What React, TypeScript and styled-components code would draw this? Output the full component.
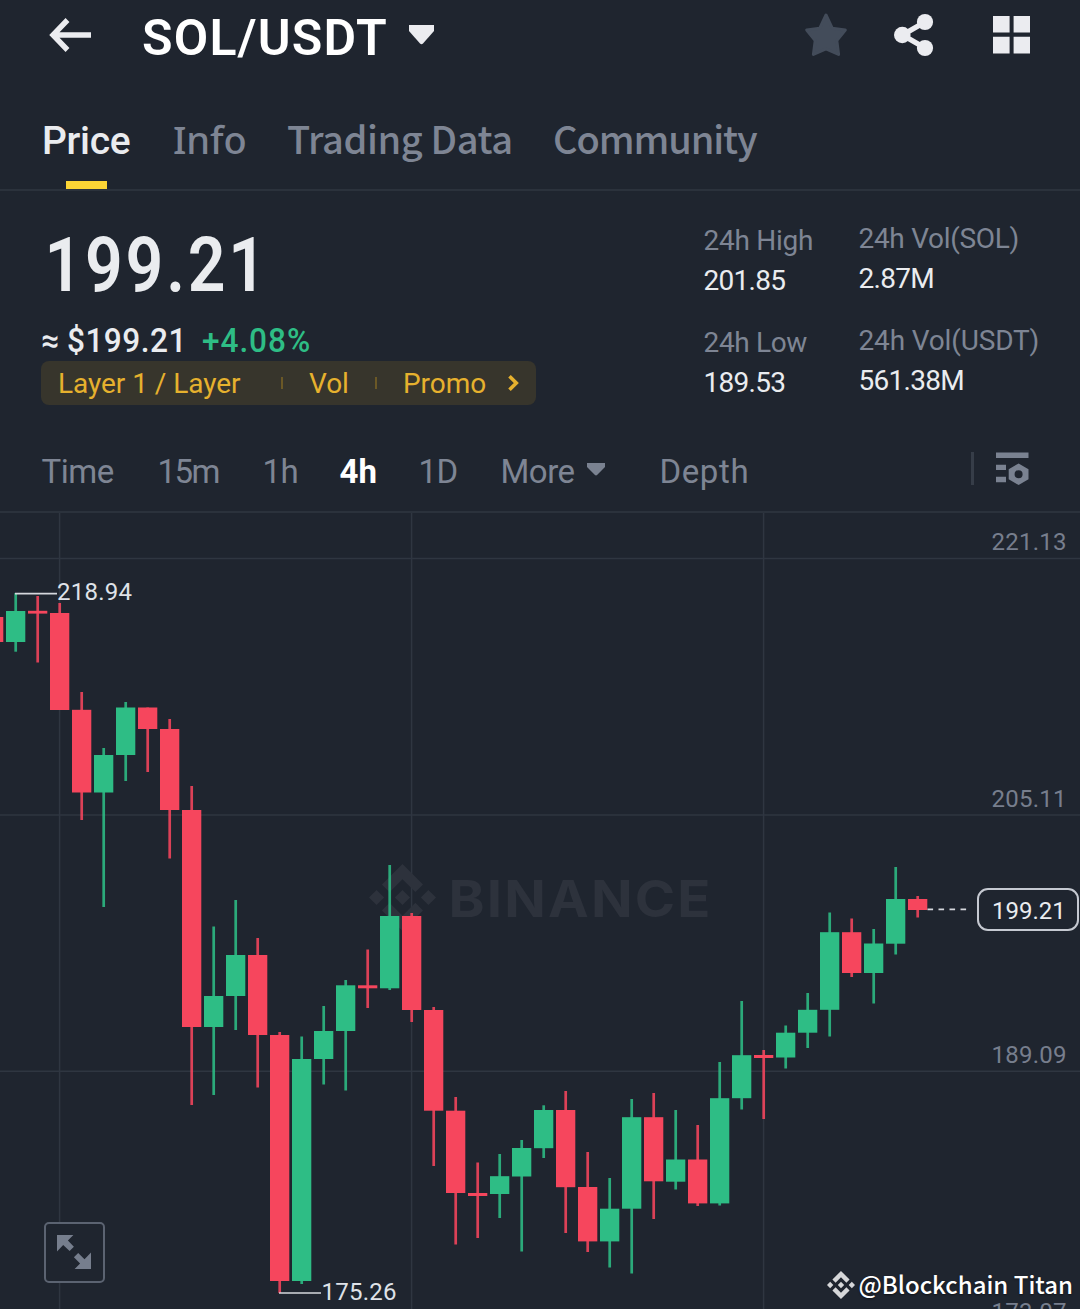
import React from 'react';
import styled, { createGlobalStyle } from 'styled-components';
import { SiBinance } from 'react-icons/si';

const color = {
  bg: '#1f252f',
  text: '#eaecef',
  muted: '#7e8594',
  line: '#2b323c',
  up: '#2ebd85',
  down: '#f6465d',
  gold: '#e6b12e',
};

const Global = createGlobalStyle`
  body { margin: 0; background: ${color.bg}; }
  * { box-sizing: border-box; }
`;

const Screen = styled.main`
  position: relative;
  width: 1080px;
  height: 1309px;
  overflow: hidden;
  display: flex;
  flex-direction: column;
  background: ${color.bg};
  color: ${color.text};
  font-family: Roboto, 'Liberation Sans', sans-serif;
  white-space: nowrap;
`;

const Header = styled.header`
  height: 70px;
  display: grid;
  grid-template-columns: 93px 267px 395px 90px 99px 60px;
  grid-template-rows: 70px;
  padding-left: 49px;
  align-items: center;
  svg { display: block; }
`;

const Pair = styled.h1`
  margin: 0;
  padding-top: 5px;
  font-size: 50px;
  line-height: 66px;
  font-weight: 600;
  letter-spacing: 1.2px;
  color: #fff;
`;

const Tabs = styled.nav`
  height: 121px;
  border-bottom: 2px solid ${color.line};
  display: grid;
  grid-template-columns: 131px 114px 266px 300px;
  padding-left: 42px;
`;

const Tab = styled.div<{ $active?: boolean; $spacing: number; $family?: string; $size?: number; $top?: number }>`
  display: flex;
  flex-direction: column;
  justify-content: space-between;
  padding-top: ${(p) => p.$top ?? 46}px;
  font-family: ${(p) => p.$family ?? 'Roboto'}, sans-serif;
  font-size: ${(p) => p.$size ?? 39}px;
  line-height: 48px;
  font-weight: 500;
  letter-spacing: ${(p) => p.$spacing}px;
  color: ${(p) => (p.$active ? color.text : color.muted)};
`;

const Underline = styled.span`
  width: 41px;
  height: 8px;
  margin-left: 24px;
  background: #fcd535;
`;

const Summary = styled.section`
  height: 240px;
  display: grid;
  grid-template-columns: 662.5px 155px 200px;
  padding-left: 41px;
`;

const Quote = styled.div`
  padding-top: 34px;
`;

const LastPrice = styled.div`
  padding-left: 4px;
  font-size: 76px;
  line-height: 80px;
  font-weight: 650;
  letter-spacing: 3.2px;
  transform: scaleX(0.87);
  transform-origin: left;
`;

const Converted = styled.div`
  display: grid;
  grid-template-columns: 26px 135px auto;
  margin-top: 15px;
  font-size: 34px;
  line-height: 40px;
  font-weight: 500;
`;

const Figure = styled.span<{ $spacing: number; $up?: boolean }>`
  letter-spacing: ${(p) => p.$spacing}px;
  color: ${(p) => (p.$up ? color.up : 'inherit')};
  transform: scaleX(0.93);
  transform-origin: left;
`;

const Tags = styled.div`
  width: 495px;
  height: 44px;
  margin-top: 1px;
  padding-left: 17px;
  display: grid;
  grid-template-columns: 223px 28px 66px 28px 104px 20px;
  align-items: center;
  border-radius: 8px;
  background: #37352c;
  color: ${color.gold};
  font-size: 28px;
  letter-spacing: -0.05px;
`;

const TagBar = styled.i`
  width: 2px;
  height: 12px;
  background: #6b5826;
`;

const Stats = styled.dl<{ $top: number }>`
  margin: 0;
  padding-top: ${(p) => p.$top}px;
  font-size: 28px;
  line-height: 40px;
`;

const StatLabel = styled.dt<{ $spacing?: number }>`
  color: ${color.muted};
  letter-spacing: ${(p) => p.$spacing ?? -0.15}px;
`;

const StatValue = styled.dd`
  margin: 0 0 22px;
  letter-spacing: -0.7px;
`;

const Intervals = styled.nav`
  height: 82px;
  display: grid;
  grid-template-columns: 116px 105px 77px 79px 82px 86px 73px 311px 25px 40px;
  padding-left: 41.5px;
  align-items: center;
  border-bottom: 2px solid ${color.line};
  font-size: 33px;
  color: ${color.muted};
  svg { display: block; margin-top: -4px; }
`;

const Interval = styled.span<{ $active?: boolean; $spacing?: number }>`
  letter-spacing: ${(p) => p.$spacing ?? -0.5}px;
  font-weight: ${(p) => (p.$active ? 700 : 400)};
  color: ${(p) => (p.$active ? '#fff' : 'inherit')};
`;

const Divider = styled.i`
  width: 3px;
  height: 33px;
  margin-top: -5px;
  background: #363d48;
`;

const ChartArea = styled.section`
  position: relative;
  height: 796px;
`;

const ChartSvg = styled.svg`
  display: block;
  font-family: Roboto, sans-serif;
  font-size: 24px;
  font-weight: 380;
  letter-spacing: 0.25px;
`;

const PriceTag = styled.div`
  position: absolute;
  left: 977px;
  top: 375px;
  width: 102px;
  height: 43px;
  border: 2px solid #c5c9d1;
  border-radius: 11px;
  background: ${color.bg};
  padding-left: 13px;
  font-size: 24px;
  font-weight: 380;
  line-height: 42px;
`;

const ExpandButton = styled.button`
  position: absolute;
  left: 44px;
  top: 709px;
  width: 61px;
  height: 61px;
  padding: 0 1px 1px 0;
  border: 2px solid #5b6371;
  border-radius: 5px;
  background: ${color.bg};
  display: grid;
  place-items: center;
`;

const Author = styled.div`
  position: absolute;
  right: 7px;
  bottom: 8px;
  display: flex;
  align-items: center;
  gap: 3px;
  font: 500 24px/34px 'Noto Sans CJK SC', sans-serif;
  color: #fff;
  text-shadow: 0 1px 2px #0008;
  svg { color: #d6d7d9; display: block; margin-top: 1px; }
`;

type Candle = [up: 0 | 1, high: number, top: number, bottom: number, low: number];

const candles: Candle[] = [
  [0, 617, 617, 642, 642],
  [1, 593, 611, 642, 651.7],
  [0, 596, 610.8, 613.6, 662.5],
  [0, 603, 613, 710, 710],
  [0, 692, 709.8, 792.5, 820],
  [1, 748, 755, 792.5, 907],
  [1, 702, 707.5, 755, 781],
  [0, 707.5, 707.5, 729, 772],
  [0, 719, 729, 810, 858.5],
  [0, 786, 810, 1027, 1105],
  [1, 926.5, 996, 1027, 1095],
  [1, 900, 955, 996, 1030],
  [0, 938, 955, 1035, 1087.5],
  [0, 1032, 1035, 1281, 1293],
  [1, 1036.5, 1059, 1281, 1284],
  [1, 1006, 1031, 1059, 1084.5],
  [1, 980, 985.3, 1031, 1090.5],
  [0, 949.5, 985.3, 988.3, 1008],
  [1, 865, 916, 988.3, 990],
  [0, 913, 916, 1010, 1022],
  [0, 1007, 1010, 1110.7, 1166],
  [0, 1097, 1110.7, 1193, 1244.5],
  [0, 1162.5, 1193, 1196, 1238],
  [1, 1154, 1176.2, 1194, 1218],
  [1, 1140, 1148, 1176.5, 1251.5],
  [1, 1105.3, 1110, 1148.2, 1158],
  [0, 1091, 1110, 1187.2, 1233],
  [0, 1152, 1187, 1241.4, 1252],
  [1, 1178, 1208.7, 1241.4, 1267.5],
  [1, 1099, 1117.2, 1208.7, 1273.5],
  [0, 1093, 1117.2, 1181.3, 1219],
  [1, 1110, 1159.5, 1181.7, 1189.5],
  [0, 1125, 1159.5, 1203.4, 1206],
  [1, 1062, 1098.2, 1203.4, 1205.5],
  [1, 1001, 1055.2, 1098.2, 1109.5],
  [0, 1050, 1055, 1058, 1119],
  [1, 1025.5, 1032.7, 1057.5, 1068.5],
  [1, 993, 1009.8, 1032.7, 1048],
  [1, 912.5, 932.2, 1009.8, 1036.5],
  [0, 918.5, 932.2, 973, 977],
  [1, 929, 943.5, 973, 1003.5],
  [1, 867, 899, 943.7, 954.5],
  [0, 896, 899, 910, 917.5],
];

const Caret = ({ width, height, fill }: { width: number; height: number; fill: string }) => (
  <svg width={width} height={height} viewBox="0 0 25 20" preserveAspectRatio="none">
    <path d="M0 0H25V6L14 18.6Q12.5 20 11 18.6L0 6Z" fill={fill} />
  </svg>
);

const BackArrow = () => (
  <svg width="42" height="36" viewBox="0 0 42 36" fill="none" stroke="#ebecf0" strokeWidth="5.4">
    <path d="M18.5 3L4 18L18.5 33M4 18H42" />
  </svg>
);

const Star = () => (
  <svg width="44" height="46" viewBox="0 0 44 46" fill="#434c5a" stroke="#434c5a" strokeWidth="3" strokeLinejoin="round">
    <path d="M22 3L28.2 16.2L41.3 18L32.8 28.5L34.6 42.5L22 36.8L9.4 42.5L11.2 28.5L2.7 18L15.8 16.2Z" />
  </svg>
);

const Share = () => (
  <svg width="40" height="44" viewBox="0 0 40 44" fill="#ebecf0">
    <path d="M31 9L8.5 22L31 35" fill="none" stroke="#ebecf0" strokeWidth="5.4" />
    <circle cx="31" cy="9" r="8.1" />
    <circle cx="8.3" cy="22" r="8.3" />
    <circle cx="31" cy="35" r="8.1" />
  </svg>
);

const Squares = () => (
  <svg width="38" height="38" viewBox="0 0 38 38" fill="#ebecf0">
    <path d="M0 0H16.6V16.6H0ZM20.6 0H37V16.6H20.6ZM0 20.8H16.6V37.4H0ZM20.6 20.8H37V37.4H20.6Z" />
  </svg>
);

const ChartSettings = () => (
  <svg width="33" height="34" viewBox="0 0 33 34" fill="#7a8291">
    <path d="M0 0.5H32.5V6H0ZM0 12.7H10V18H0ZM0 24.8H10V30.3H0Z" />
    <path fillRule="evenodd" d="M22.6 11.5L32.5 17.2V27.3L22.6 33L12.7 27.3V17.2ZM22.6 18.2A4 4 0 1 0 22.6 26.2A4 4 0 1 0 22.6 18.2Z" />
  </svg>
);

const Expand = () => (
  <svg width="34" height="34" viewBox="0 0 34 34" fill="#767e8d">
    <path d="M0 0H16.4L10.9 5.6L16.9 11.8L12.6 16L6.2 9.9L0 16.4Z" />
    <path d="M34 34H17.6L23.1 28.4L16.9 22.3L21.2 18L27.5 24.3L34 17.6Z" />
  </svg>
);

const Chart = () => (
  <ChartSvg width="1080" height="796" viewBox="0 513 1080 796">
    <g stroke="#2f3641" strokeWidth="1.5">
      {[558.5, 815, 1071.3].map((y) => <line key={y} x1="0" x2="1080" y1={y} y2={y} />)}
      {[59.6, 411.6, 763.6].map((x) => <line key={x} y1="513" y2="1309" x1={x} x2={x} />)}
    </g>
    <SiBinance x="369" y="864" size={67} color="#2d323c" />
    <text x="448.5" y="916.6" fill="#2d323c" fontFamily="Inter" fontWeight="700" fontSize="51" letterSpacing="2" textLength="264" lengthAdjust="spacingAndGlyphs">BINANCE</text>
    {candles.map(([up, high, top, bottom, low], i) => {
      const cx = 15.7 + 22 * (i - 1);
      return (
        <g key={i} fill={up ? color.up : color.down}>
          <rect x={cx - 1.35} y={high} width="2.7" height={low - high} opacity="0.88" />
          <rect x={cx - 9.7} y={top} width="19.3" height={bottom - top} />
        </g>
      );
    })}
    <g fill="none" stroke="#d5d8dd" strokeWidth="1.6">
      <path d="M15 593.6H57M279 1293H321" />
      <path d="M927.5 909.4H967" strokeDasharray="5.6 5.4" />
    </g>
    <g fill="#dfe2e8">
      <text x="57" y="600">218.94</text>
      <text x="321.5" y="1300">175.26</text>
    </g>
    <g fill="#777e8d">
      <text x="991.5" y="550">221.13</text>
      <text x="991.5" y="807">205.11</text>
      <text x="991.5" y="1063">189.09</text>
      <text x="991.5" y="1320">173.07</text>
    </g>
  </ChartSvg>
);

export default function App() {
  return (
    <Screen>
      <Global />
      <Header>
        <BackArrow />
        <Pair>SOL/USDT</Pair>
        <div><Caret width={25} height={20} fill="#ebecf0" /></div>
        <Star />
        <Share />
        <Squares />
      </Header>
      <Tabs>
        <Tab $active $spacing={-0.3} $top={47}>Price<Underline /></Tab>
        <Tab $spacing={-0.1} $family="'Noto Sans'" $size={38} $top={45}>Info</Tab>
        <Tab $spacing={-0.4} $family="'Noto Sans CJK SC'" $size={38} $top={44}>Trading Data</Tab>
        <Tab $spacing={-1.1} $family="'Noto Sans CJK SC'" $size={38} $top={44}>Community</Tab>
      </Tabs>
      <Summary>
        <Quote>
          <LastPrice>199.21</LastPrice>
          <Converted>
            <Figure $spacing={0}>≈</Figure>
            <Figure $spacing={0.5}>$199.21</Figure>
            <Figure $spacing={1} $up>+4.08%</Figure>
          </Converted>
          <Tags>
            <span>Layer 1 / Layer</span>
            <TagBar />
            <span>Vol</span>
            <TagBar />
            <span>Promo</span>
            <svg width="13" height="18" viewBox="0 0 13 18" fill="none" stroke={color.gold} strokeWidth="3.6">
              <path d="M2.5 2.2L9.3 9L2.5 15.8" />
            </svg>
          </Tags>
        </Quote>
        <Stats $top={30}>
          <StatLabel $spacing={-0.25}>24h High</StatLabel>
          <StatValue>201.85</StatValue>
          <StatLabel $spacing={-0.35}>24h Low</StatLabel>
          <StatValue>189.53</StatValue>
        </Stats>
        <Stats $top={28}>
          <StatLabel $spacing={-0.3}>24h Vol(SOL)</StatLabel>
          <StatValue>2.87M</StatValue>
          <StatLabel>24h Vol(USDT)</StatLabel>
          <StatValue>561.38M</StatValue>
        </Stats>
      </Summary>
      <Intervals>
        <Interval>Time</Interval>
        <Interval $spacing={-1.5}>15m</Interval>
        <Interval>1h</Interval>
        <Interval $active $spacing={0}>4h</Interval>
        <Interval>1D</Interval>
        <Interval>More</Interval>
        <div><Caret width={18} height={13} fill="#7a8291" /></div>
        <Interval $spacing={0.6}>Depth</Interval>
        <Divider />
        <ChartSettings />
      </Intervals>
      <ChartArea>
        <Chart />
        <PriceTag>199.21</PriceTag>
        <ExpandButton aria-label="Expand chart"><Expand /></ExpandButton>
      </ChartArea>
      <Author>
        <SiBinance size={28} />
        <span>@Blockchain Titan</span>
      </Author>
    </Screen>
  );
}
